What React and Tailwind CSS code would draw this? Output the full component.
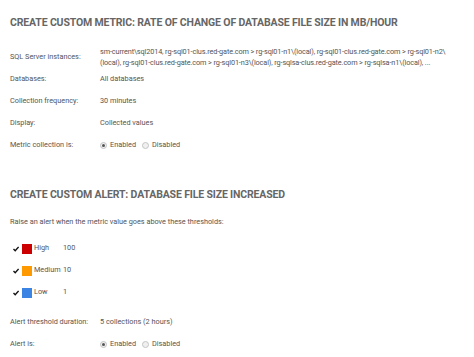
import React from "react";

const font = { fontFamily: "Roboto, 'Liberation Sans', sans-serif" };

function Radio({ checked }) {
  return (
    <span className="inline-flex h-[7px] w-[7px] shrink-0 items-center justify-center rounded-full border border-[#c4c4c4] bg-[#f0f0f0]">
      {checked && <span className="h-[3px] w-[3px] rounded-full bg-[#555]" />}
    </span>
  );
}

function Row({ label, children, className = "" }) {
  return (
    <div className={"flex items-center " + className}>
      <div className="w-[90px] shrink-0">{label}</div>
      <div>{children}</div>
    </div>
  );
}

function Toggle() {
  return (
    <div className="flex items-center">
      <Radio checked />
      <span className="ml-[3px]">Enabled</span>
      <span className="ml-[6px] flex"><Radio /></span>
      <span className="ml-[3px]">Disabled</span>
    </div>
  );
}

function Check() {
  return (
    <svg width="6" height="6" viewBox="0 0 6 6" className="shrink-0">
      <path d="M0.5 3.1 L2.2 4.8 L5.6 0.9" fill="none" stroke="#111" strokeWidth="1.4" />
    </svg>
  );
}

function Thr({ color, name, value }) {
  return (
    <div className="flex h-[22px] items-center pl-[3px]">
      <Check />
      <span className="ml-[3px] h-[10px] w-[10px] shrink-0" style={{ background: color }} />
      <span className="ml-[2px] w-[29px]">{name}</span>
      <span>{value}</span>
    </div>
  );
}

export default function App() {
  return (
    <div className="h-[357px] w-[474px] overflow-hidden bg-white px-[10px] text-[7.3px] text-[#555]" style={font}>
      <div className="pt-[16px] text-[10.5px] font-bold leading-[14px] tracking-[-0.15px] text-[#666]">
        CREATE CUSTOM METRIC: RATE OF CHANGE OF DATABASE FILE SIZE IN MB/HOUR
      </div>
      <div className="mt-[16px] flex items-center">
        <div className="w-[90px] shrink-0">SQL Server instances:</div>
        <div className="leading-[11px] whitespace-nowrap tracking-[-0.12px]">
          sm-current\sql2014, rg-sql01-clus.red-gate.com &gt; rg-sql01-n1\(local), rg-sql01-clus.red-gate.com &gt; rg-sql01-n2\
          <br />
          (local), rg-sql01-clus.red-gate.com &gt; rg-sql01-n3\(local), rg-sqlsa-clus.red-gate.com &gt; rg-sqlsa-n1\(local), ...
        </div>
      </div>
      <Row label="Databases:" className="h-[22px]">All databases</Row>
      <Row label="Collection frequency:" className="h-[22px]">30 minutes</Row>
      <Row label="Display:" className="h-[22px]">Collected values</Row>
      <Row label="Metric collection is:" className="h-[22px]"><Toggle /></Row>
      <div className="mt-[32px] text-[10.5px] font-bold leading-[14px] tracking-[-0.15px] text-[#666]">
        CREATE CUSTOM ALERT: DATABASE FILE SIZE INCREASED
      </div>
      <div className="mt-[15px]">Raise an alert when the metric value goes above these thresholds:</div>
      <div className="mt-[10px]">
        <Thr color="#cc0000" name="High" value="100" />
        <Thr color="#ff9900" name="Medium" value="10" />
        <Thr color="#3c84e4" name="Low" value="1" />
      </div>
      <Row label="Alert threshold duration:" className="mt-[8px] h-[22px]">5 collections (2 hours)</Row>
      <Row label="Alert is:" className="h-[22px]"><Toggle /></Row>
    </div>
  );
}
